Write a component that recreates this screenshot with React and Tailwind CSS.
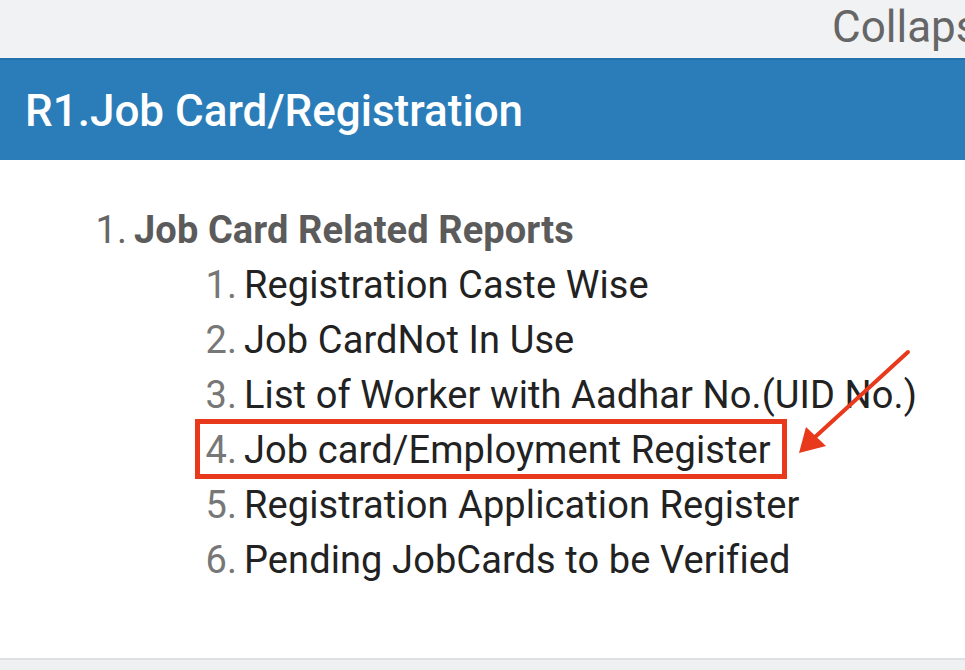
import React from 'react'

const reports = [
  'Registration Caste Wise',
  'Job CardNot In Use',
  'List of Worker with Aadhar No.(UID No.)',
  'Job card/Employment Register',
  'Registration Application Register',
  'Pending JobCards to be Verified',
]

export default function App() {
  return (
    <div className="relative w-[965px] h-[670px] overflow-hidden bg-white font-['Roboto',sans-serif]">
      {/* top strip with the collapse toggle */}
      <div className="h-[58px] bg-[#f1f2f4] flex justify-start pl-[832px] whitespace-nowrap">
        <span className="text-[44px] leading-[50px] text-[#666] pt-[2px]">Collapse</span>
      </div>

      {/* section header */}
      <div className="h-[102px] bg-[#2a7db8] border-t-2 border-[#2372ab] flex items-center px-[25px]">
        <h2 className="text-white text-[44px] font-medium pt-[2px]">R1.Job Card/Registration</h2>
      </div>

      {/* report list */}
      <div className="h-[498px] pt-[43px] text-[38px] leading-[55px] tracking-[0.1px]">
        <ol>
          <li>
            <div className="flex">
              <span className="w-[134px] pr-[7px] text-right text-[#666]">1.</span>
              <span className="font-bold text-[#5b5b5b]">Job Card Related Reports</span>
            </div>
            <ol>
              {reports.map((r, i) => (
                <li key={r} className="flex">
                  <span className="w-[244px] pr-[7px] text-right text-[#777]">{i + 1}.</span>
                  <span className="text-[#222] whitespace-nowrap">{r}</span>
                </li>
              ))}
            </ol>
          </li>
        </ol>
      </div>

      <div className="h-[12px] bg-[#eff0f2] border-t-2 border-[#dfe0e2]" />

      {/* highlight box around item 4 */}
      <div className="absolute left-[195px] top-[419px] w-[592px] h-[60px] border-[5px] border-[#e8391d]" />

      {/* pointer arrow */}
      <svg className="absolute left-0 top-0" width="965" height="670" viewBox="0 0 965 670">
        <line x1="908" y1="352" x2="814" y2="438" stroke="#e8391d" strokeWidth="4" strokeLinecap="round" />
        <polygon points="799,453 806,427 826,446" fill="#e8391d" />
      </svg>
    </div>
  )
}
